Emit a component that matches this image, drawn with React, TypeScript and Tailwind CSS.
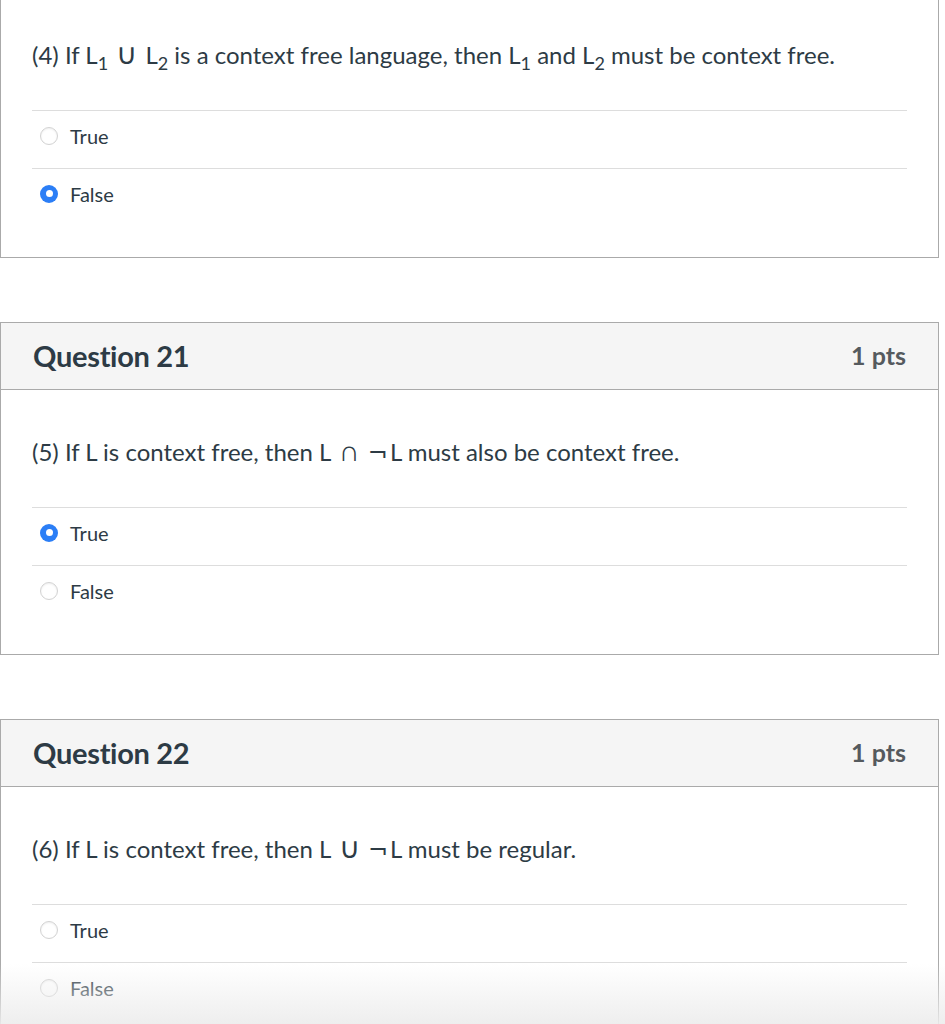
import React from "react";

type Option = { label: string; checked: boolean };

interface QuestionProps {
  title: string;
  points: string;
  text: React.ReactNode;
  options: Option[];
}

function Radio({ checked }: { checked: boolean }) {
  if (checked) {
    return (
      <span className="flex h-[18px] w-[18px] shrink-0 items-center justify-center rounded-full bg-[#2b7ef6]">
        <span className="h-[7px] w-[7px] rounded-full bg-white" />
      </span>
    );
  }
  return (
    <span className="h-[18px] w-[18px] shrink-0 rounded-full border border-[#d2d2d2] bg-white shadow-[inset_0_1px_2px_rgba(0,0,0,0.07)]" />
  );
}

// subscript that doesn't push the line box
function Sub({ children }: { children: React.ReactNode }) {
  return <span className="relative top-[6px] text-[18px] leading-none">{children}</span>;
}

// set operators are drawn bigger in the original
function Op({ children }: { children: React.ReactNode }) {
  return (
    <span className="mx-[2px] font-['DejaVu_Sans',sans-serif] text-[29px] font-light leading-[0]">{children}</span>
  );
}

function Not() {
  return <span className="mr-[2px] font-['DejaVu_Sans',sans-serif] text-[24px] leading-[0]">¬</span>;
}

function QuestionCard({ title, points, text, options }: QuestionProps) {
  return (
    <div className="w-[939px] border border-[#aaaaaa] bg-white">
      <div className="flex h-[67px] items-center justify-between border-b border-[#aaaaaa] bg-[#f5f5f5] px-[32px]">
        <h2 className="text-[29px] font-bold tracking-[-0.3px] text-[#2d3b45]">{title}</h2>
        <span className="text-[25px] font-bold text-[#555a5e]">{points}</span>
      </div>
      <div className="px-[31px] pt-[47px] pb-[31px]">
        <p className="text-[24px] leading-[30px] text-[#2d3b45]">{text}</p>
        <div className="mt-[40px]">
          {options.map((opt, i) => (
            <div
              key={i}
              className="flex h-[58px] items-center gap-[12px] border-t border-[#dddddd] pb-[8px] pl-[8px]"
            >
              <Radio checked={opt.checked} />
              <span className="text-[20px] text-[#2d3b45]">{opt.label}</span>
            </div>
          ))}
        </div>
      </div>
    </div>
  );
}

export default function App() {
  return (
    <div className="relative h-[1024px] overflow-hidden bg-white font-['Lato','Noto_Sans',sans-serif]">
      <div className="-mt-[75px] flex flex-col gap-[64px]">
        <QuestionCard
          title="Question 20"
          points="1 pts"
          text={
            <>
              (4) If L<Sub>1</Sub> <Op>∪</Op> L<Sub>2</Sub> is a context free language, then L<Sub>1</Sub> and L
              <Sub>2</Sub> must be context free.
            </>
          }
          options={[
            { label: "True", checked: false },
            { label: "False", checked: true },
          ]}
        />
        <QuestionCard
          title="Question 21"
          points="1 pts"
          text={
            <>
              (5) If L is context free, then L <Op>∩</Op> <Not />L must also be context free.
            </>
          }
          options={[
            { label: "True", checked: true },
            { label: "False", checked: false },
          ]}
        />
        <QuestionCard
          title="Question 22"
          points="1 pts"
          text={
            <>
              (6) If L is context free, then L <Op>∪</Op> <Not />L must be regular.
            </>
          }
          options={[
            { label: "True", checked: false },
            { label: "False", checked: false },
          ]}
        />
      </div>
      <div className="pointer-events-none absolute bottom-0 left-0 right-0 h-[60px] bg-gradient-to-b from-white/0 to-[#ececec]/90" />
    </div>
  );
}
